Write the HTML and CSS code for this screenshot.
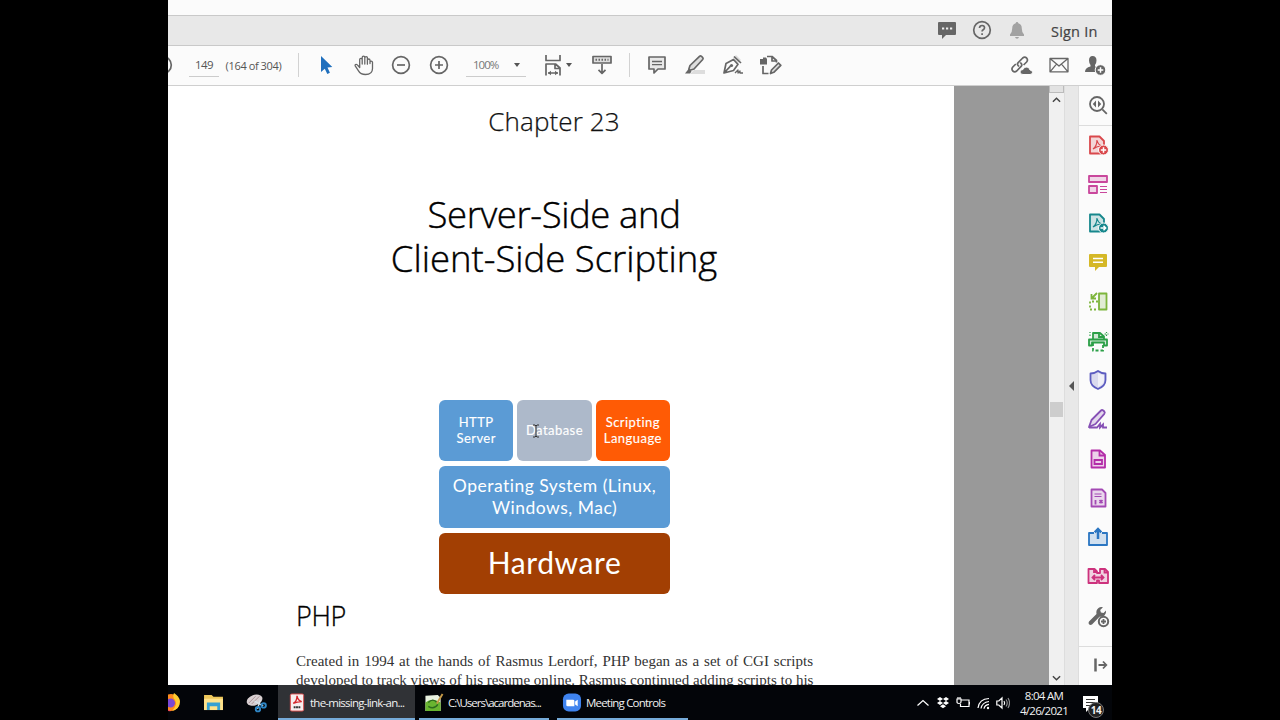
FILE: index.html
```html
<!DOCTYPE html>
<html lang="en">
<head>
<meta charset="utf-8">
<title>Server-Side and Client-Side Scripting</title>
<link rel="stylesheet" href="styles.css">
</head>
<body>
<div class="screen">
  <div class="top-strip"></div>
  <header class="account-bar">
    <svg class="ic" viewBox="0 0 24 24"><path fill="#666" d="M4 4h16q1 0 1 1v11q0 1-1 1h-9l-4 4v-4H4q-1 0-1-1V5q0-1 1-1z"/><path stroke="#eee" stroke-width="2" stroke-dasharray="2.2 1.8" d="M7 10.500h10.500"/></svg>
    <svg class="ic" viewBox="0 0 24 24"><circle class="ln" cx="12" cy="12" r="8.300"/><path class="ln" d="M9.500 10q.2-2.500 2.600-2.500t2.400 2.200q0 1.200-1.300 2-1.100.7-1.100 1.800M12.100 15.200v1.700"/></svg>
    <svg class="ic" viewBox="0 0 24 24"><path fill="#a2a2a2" d="M12 4q1.200 0 1.300 1.300 3.500 1 3.500 5.200 0 4 2.200 6v1.500H5v-1.500q2.200-2 2.200-6 0-4.200 3.500-5.200Q10.800 4 12 4zM10 19h4q-.5 1.700-2 1.700T10 19z"/></svg>
    <span class="sign-in">Sign In</span>
  </header>
  <div class="toolbar">
    <svg class="ic cut" viewBox="0 0 24 24"><circle class="ln" cx="12" cy="12" r="8.300"/></svg>
    <span class="page-no">149</span>
    <span class="page-count">(164 of 304)</span>
    <i class="rule"></i>
    <svg class="ic" viewBox="0 0 24 24"><path fill="#1f6fbd" d="M7 3v16l3.800-3.300 2.500 5.300 2.600-1.200-2.400-5.200 4.800-.5z"/></svg>
    <svg class="ic" viewBox="0 0 24 24"><path class="ln thin" d="M7.700 14.500V6.600q0-1.300 1.200-1.300t1.300 1.300V11 4.500q0-1.300 1.300-1.300t1.300 1.300V11 5q0-1.300 1.300-1.300T15.400 5v6.200V7.300q0-1.300 1.300-1.300T18 7.300v3.200-1.200q0-1.200 1.200-1.200t1.300 1.200v6.200q0 6-7 6-5 0-7-3.600l-3.300-5q-.5-1.500 1-1.600 1 0 2 1.500z"/></svg>
    <svg class="ic" viewBox="0 0 24 24"><circle class="ln" cx="12" cy="12" r="8.400"/><path class="ln" d="M8 12h8"/></svg>
    <svg class="ic" viewBox="0 0 24 24"><circle class="ln" cx="12" cy="12" r="8.400"/><path class="ln" d="M8 12h8M12 8v8"/></svg>
    <span class="zoom">100%<b class="caret"></b></span>
    <span class="fit"><svg class="ic" viewBox="0 0 24 24"><path class="ln" d="M5 2v5.500h14V2M5 22.500V11h9.500l4.500 4v7.500M14 11v4.500h5M7 20h10"/><path fill="#666" d="m10 17.700-3 2.300 3 2.300zm4 0 3 2.300-3 2.300z"/></svg><b class="caret"></b></span>
    <svg class="ic" viewBox="0 0 24 24"><path class="ln" style="fill:#ddd" d="M3 3.500h18v6.500H3z"/><path stroke="#666" stroke-width="2" stroke-dasharray="1.500 1.500" d="M5.500 6.800h13"/><path class="ln" d="M12 11v9M8.500 16.800 12 20.300l3.500-3.500"/></svg>
    <i class="rule"></i>
    <svg class="ic" viewBox="0 0 24 24"><path class="ln" style="fill:#e8e8e8" d="M4 4h16v12h-7l-4 4v-4H4z"/><path class="ln thin" d="M7 8.500h10M7 11.700h10"/></svg>
    <svg class="ic" viewBox="0 0 24 24"><path fill="#ddd" d="M11 17h11v4H7z"/><path class="ln" style="fill:#ddd" d="M7 12.500 16.500 3.300q1-.8 2 0l1.200 1.200q.8 1 0 2L11 16l-4 1.200-1.200-1z"/><path fill="#666" d="m5.500 16 3 2.500L7 20.500H2z"/></svg>
    <svg class="ic" viewBox="0 0 24 24"><path fill="#ddd" d="m12 5 3-3 5 5-3 3z"/><path class="ln" d="m3 20 2-9.500 7.500-4 4.500 4.800-4.500 6.200zM3 20l6.500-6.800M13 3.500l7 6.500"/><circle cx="10.500" cy="12.500" r="1.600" fill="#666"/><path class="ln thin" d="m14 20 3-3v3l2-2v2h3"/></svg>
    <svg class="ic nudge" viewBox="0 0 24 24"><path class="ln" d="M9 3.500h5l4.500 4v2M14 3.500V8h4.500M5 13v7.500h5.500"/><path fill="#666" d="M2 6h3V4.500h3L9 6v5.500H2z"/><path class="ln" style="fill:#ddd" d="m12.500 20.500 1-3.500 7-7 2.300 2.300-7 7z"/></svg>
    <span></span>
    <svg class="ic" viewBox="0 0 24 24"><g class="ln"><path d="m10 13.500-.8-.8q-1.500-1.600 0-3.100l4.500-4.600q2-1.600 3.900 0 1.700 2 0 4l-3 3"/><path d="m11.200 9.500.9.900q1.400 1.500 0 3L7.700 18q-2 1.600-3.900 0-1.700-2 0-4l3-3"/></g><path fill="#666" stroke="#fbfbfb" d="M14 21.500q-3 0-3-2.500t3-2.500q1-3 4-2.500 2.500.3 3 3 2.500.1 2.500 2.300 0 2.200-2.500 2.200z"/></svg>
    <svg class="ic" viewBox="0 0 24 24"><path class="ln thin" d="M3 5.500h18v13.300H3zM3 5.500l9 7.500 9-7.500M3 18.800l6.500-7.700M21 18.800l-6.500-7.700"/></svg>
    <svg class="ic" viewBox="0 0 24 24"><path fill="#666" d="M9.500 3q4 0 4 4.500 0 2.500-1.500 4.500v1.500l3 1v4.500H2q0-4.500 5.500-5.500V12Q6 10 6 7.500 6 3 9.500 3z"/><circle cx="17.500" cy="17" r="5.300" fill="#666" stroke="#fbfbfb"/><path stroke="#fff" stroke-width="1.500" d="M14.700 17h5.600M17.500 14.200v5.600"/></svg>
  </div>

  <main class="workspace">
    <article class="page">
      <h3 class="chapter">Chapter 23</h3>
      <h1 class="title"><span class="t1">Server-Side and</span><span class="t2">Client-Side Scripting</span></h1>
      <section class="stack">
        <div class="block small blue">HTTP<br>Server</div>
        <div class="block small slate">Database<svg class="ibeam" viewBox="0 0 8 14"><path d="M1 1h2l1 1 1-1h2M4 2v10M1 13h2l1-1 1 1h2" fill="none" stroke="#333"/></svg></div>
        <div class="block small orange">Scripting<br>Language</div>
        <div class="block medium wide blue"><span>Operating System (Linux,<br>Windows, Mac)</span></div>
        <div class="block large wide brown">Hardware</div>
      </section>
      <h2 class="section-title">PHP</h2>
      <p class="copy"><span>Created in 1994 at the hands of Rasmus Lerdorf, PHP began as a set of CGI scripts</span><span>developed to track views of his resume online. Rasmus continued adding scripts to his</span></p>
    </article>
    <div class="canvas"></div>
    <div class="scrollbar">
      <i class="split"></i>
      <svg class="arrow" viewBox="0 0 10 6"><path d="m1 5 4-4 4 4"/></svg>
      <i class="thumb"></i>
      <svg class="arrow" viewBox="0 0 10 6"><path d="m1 1 4 4 4-4"/></svg>
    </div>
    <div class="gutter"><i class="collapse"></i></div>
    <aside class="tools">
      <div class="tool first"><svg class="ic gray" viewBox="0 0 24 24"><circle class="s2" cx="11" cy="11" r="7"/><path class="s2" d="m16.300 16.300 4.500 4.500"/><path fill="#666" d="M10 7.500v7L6.800 11zm2 0v7l3.200-3.500z"/></svg></div>
      <div class="tool"><svg class="ic red" viewBox="0 0 24 24"><path class="sf" d="M4 3.500h9.500L18 8v12.500H4z"/><path class="s1" d="M7 16q4-3 4-9 1 5 5 6-5 0-9 3z"/><circle class="dot" cx="17.500" cy="17" r="5"/><path class="w" d="M14.800 17h5.400m-2.700-2.700v5.400"/></svg></div>
      <div class="tool"><svg class="ic pink" viewBox="0 0 24 24"><path class="sf" d="M3 4h18v6H3zM3 14h8v7H3z"/><path class="s1" d="M14 14.500h7M14 17.500h7M14 20.500h7"/></svg></div>
      <div class="tool"><svg class="ic teal" viewBox="0 0 24 24"><path class="sf" d="M4 3.500h9.500L18 8v12.500H4z"/><path class="s1" d="M7 16q4-3 4-9 1 5 5 6-5 0-9 3z"/><circle class="dot" cx="17.500" cy="17" r="5"/><path class="w" d="M14.500 17h5m-2-2.200 2.200 2.200-2.200 2.200"/></svg></div>
      <div class="tool"><svg class="ic gold" viewBox="0 0 24 24"><path fill="currentColor" d="M4 4h16q1 0 1 1v11q0 1-1 1h-7l-4 4v-4H4q-1 0-1-1V5q0-1 1-1z"/><path class="w" d="M7 8.500h10M7 12.200h10"/></svg></div>
      <div class="tool"><svg class="ic lime" viewBox="0 0 24 24"><path class="sf" d="M13 3.500h7.500v16H13z"/><path class="s2" stroke-dasharray="2 2" d="M12 11.500H4v8h8"/><path class="s2" d="m11 3-5 5M5.500 4v4.500H10"/></svg></div>
      <div class="tool"><svg class="ic green" viewBox="0 0 24 24"><path class="sf" d="M7 10V4h7l4 3.500V10M3 10.500h18v6h-3v-3H6v3H3z"/><path class="s2" d="M13 4v4h5"/><path class="s2" stroke-dasharray="3 2" d="M7 14v7.500h10V14"/><path class="s1" stroke-dasharray="1.500 1.500" d="M4 7V3M20.500 7V3M18.500 5h4"/></svg></div>
      <div class="tool"><svg class="ic indigo" viewBox="0 0 24 24"><path class="sf" d="M12 3q3.500 2.500 7.500 2.500V12q0 6-7.500 9-7.500-3-7.500-9V5.500Q8.500 5.500 12 3z"/><path fill="#fff" opacity=".6" d="M12 5v14q6-3 6-7V7q-3 0-6-2z"/></svg></div>
      <div class="tool"><svg class="ic violet" viewBox="0 0 24 24"><path class="sf" d="m3 20 2.500-7L15 3.500q1-1 2.300 0l1 1q1 1 0 2.300L9.500 17z"/><path class="s2" d="M3 20.500h8l3-3.500v3.500l3-3v3h4"/></svg></div>
      <div class="tool"><svg class="ic magenta" viewBox="0 0 24 24"><path class="sf" d="M5.500 3.500H14L19 8v12.500H5.500z"/><path class="s2" d="M13.500 4v4.500H19M8.500 13h7.500v4H8.500z"/></svg></div>
      <div class="tool"><svg class="ic purple" viewBox="0 0 24 24"><path class="sf" d="M5.500 3.500H16l3.500 3.500v13.500h-14z"/><path class="s1" d="M8.500 8h7M8.500 10.500h7"/><path class="s2" d="M9.500 14v4.500M13.500 14.200l3 3m0-3-3 3"/></svg></div>
      <div class="tool"><svg class="ic blue-ic" viewBox="0 0 24 24"><path class="sf" d="M8 8H3v12h18V8h-5"/><path class="s2" d="M12 14V4M8.700 7.300 12 4l3.300 3.300" style="stroke-width:2.500"/></svg></div>
      <div class="tool"><svg class="ic rose" viewBox="0 0 24 24"><path class="sf" d="M2.500 5h6l2.500 2.500V9h3V5h5l3 3v11h-9v-2.500h-2V19H2.500z"/><path class="s2" d="M6.500 13.500h11M9 11l-2.500 2.500L9 16m6-5 2.500 2.500L15 16M8 5v3h3M18.500 5v3.500H22"/></svg></div>
      <div class="tool"><svg class="ic gray" viewBox="0 0 24 24"><path fill="#666" d="M3 17.500 10.500 10Q9.700 6 12.500 4q2-1.500 4.500-.7L14.200 6l.7 2.500 2.600.6L20 6.500q.5 3-1.500 5-2 1.700-5 1.200L6 20.500q-1.700 1-3-.2-1-1.400 0-2.800z"/><circle cx="17.500" cy="17.500" r="4.700" fill="#fbfbfb" stroke="#666" stroke-width="2"/><path class="s2" d="M15 17.500h5M17.500 15v5"/></svg></div>
      <div class="tool exit"><svg class="ic gray" viewBox="0 0 24 24"><path class="s2" d="M9.500 5.500v13" style="stroke-width:2.500"/><path class="s2" d="M12.500 12H20m-3-3.500 3.300 3.500-3.300 3.500"/></svg></div>
    </aside>
  </main>

  <footer class="taskbar">
    <svg class="fox" viewBox="0 0 20 20"><circle cx="10" cy="10.500" r="8.500" fill="#ff8a1d"/><path d="M13 1q5 3 6 8 0 8-8 10 6-6 3-11-3-3-1-7z" fill="#ffcd32"/><path d="M1.500 9q1 9 9 10Q4 20 1.500 14z" fill="#f13b62"/><circle cx="9.500" cy="11" r="4.500" fill="#7948d5"/></svg>
    <svg class="folder" viewBox="0 0 20 18"><path fill="#edc75a" d="M0 1h8l2 2h10v14H0z"/><path fill="#ffe28a" d="M0 5h20v12H0z"/><path fill="#36a1d2" d="M3 9h14v8h-3v-4H6v4H3z"/></svg>
    <svg class="snip" viewBox="0 0 22 20"><ellipse cx="9" cy="7" rx="8.500" ry="5.500" transform="rotate(-20 9 7)" fill="#d8cfd0"/><path d="m3 10 7-7M6 11l8-8" stroke="#a98f93"/><path d="m9 8 9 5M15 7l-3 9" stroke="#d9e3e9" stroke-width="1.500"/><g fill="none" stroke="#2f86c5" stroke-width="2"><circle cx="18.500" cy="12.500" r="2.300"/><circle cx="12.500" cy="16.500" r="2.300"/></g></svg>
    <div class="task active w1"><svg class="app" viewBox="0 0 18 20"><rect x="2" y="1" width="14" height="18" rx="1.500" fill="#f8eeee" stroke="#d94a4a"/><path d="M5 11q4-2 4-8 1 5 5 6-5 0-9 2z" fill="none" stroke="#d5262b" stroke-width="1.400"/><path d="M5.500 15h7" stroke="#333" stroke-width="2" stroke-dasharray="2 .5"/></svg><span class="l1">the-missing-link-an...</span></div>
    <div class="task w2"><svg class="app" viewBox="0 0 20 20"><path fill="#e9f2e1" d="m1 3 13-1 3 3v14H1z"/><path fill="#69b530" d="M1 10q7-6 16 0v9H1z"/><path fill="none" stroke="#2d6a1f" stroke-width="1.500" d="M4 10q5-5 9 0M4 14q6 4 10-2"/><path stroke="#c69a48" stroke-width="2" d="m19 1-6 10"/></svg><span class="l2">C:\Users\acardenas...</span></div>
    <div class="task w3"><svg class="app" viewBox="0 0 20 20"><rect x=".5" y=".5" width="19" height="19" rx="6" fill="#3f83ee"/><path fill="#fff" d="M4 7h7q1.500 0 1.500 1.500V14h-7Q4 14 4 12.500zm9.300 2L16 7v7l-2.700-2z"/></svg><span class="l3">Meeting Controls</span></div>
    <div class="tray">
      <svg class="tr" viewBox="0 0 14 14"><path d="m1.500 9.500 5.500-5 5.500 5"/></svg>
      <svg class="tr" viewBox="0 0 14 14"><path style="fill:#fff;stroke:none" d="m4 1 3 2-3 2-3-2zm6 0 3 2-3 2-3-2zM4 5l3 2-3 2-3-2zm6 0 3 2-3 2-3-2zM7 8.300l3 2-3 2-3-2z"/></svg>
      <svg class="tr" viewBox="0 0 14 14"><path d="M5.500 4H13v6.500H4.500V8M13.500 6v2.500M1 3h4v3q0 1.500-2 1.500T1 6zM2 1v2M4 1v2"/></svg>
      <svg class="tr" viewBox="0 0 14 14"><path d="M2 12Q3 3 13 2.500M5 12.500q1-6 8-7M8 12.800q.5-4 5-4.500"/><circle cx="12" cy="12" r="1.200" style="fill:#fff;stroke:none"/></svg>
      <svg class="tr" viewBox="0 0 14 14"><path d="M.8 5h2L6 2v10L2.800 9h-2zM8 5q1.300 2 0 4"/><path d="M10 3.500q2.500 3.500 0 7M12 2q3 5 0 10" opacity=".55"/></svg>
    </div>
    <div class="clock"><span class="time">8:04 AM</span><span class="date">4/26/2021</span></div>
    <div class="notice"><svg viewBox="0 0 15 17"><path fill="#fff" d="M0 1h15v12H7l-4 4v-4H0z"/><path stroke="#333" d="M3 4.500h9M3 7.500h9M3 10.500h5"/></svg><b class="badge">14</b></div>
  </footer>
</div>
</body>
</html>
```
FILE: styles.css
```css
* { box-sizing: border-box; }
body { margin: 0; background: #000; overflow: hidden; font-family: "Open Sans", "Noto Sans", sans-serif; }
h1, h2, h3, p { margin: 0; font-weight: 300; }
.screen { width: 944px; height: 720px; margin-left: 168px; overflow: hidden; display: flex; flex-direction: column; background: #fbfbfb; }
.top-strip { height: 15px; flex: none; }
.account-bar { height: 31px; flex: none; background: #e8e8e8; border-top: 1px solid #c9c9c9; border-bottom: 1px solid #c9c9c9; display: flex; align-items: center; justify-content: flex-end; padding: 0 14px 1px 0; }
.account-bar .ic { margin-right: 11px; }
.account-bar .ic:nth-of-type(3) { margin-right: 22px; }
.sign-in { font-size: 14.5px; color: #444; width: 47px; white-space: nowrap; letter-spacing: .2px; line-height: 20px; padding-top: 3px; -webkit-text-stroke: .2px #444; }
.ic { width: 24px; height: 24px; display: block; flex: none; }
.ln { fill: none; stroke: #666; stroke-width: 1.7; stroke-linejoin: round; }
.ln.thin { stroke-width: 1.3; }
.toolbar { height: 40px; flex: none; border-bottom: 1px solid #cfcfcf; padding-bottom: 1px; display: grid; grid-template-columns: 21px 30px 69px 20px 36px 39px 36px 39px 76px 50px 36px 18px 38px 38px 37px 39px 1fr 38px 38px 34px; justify-items: center; align-items: center; font-size: 11.5px; color: #555; }
.cut { justify-self: start; margin-left: -17px; }
.page-no { width: 30px; height: 24px; line-height: 24px; text-align: center; border-bottom: 1px solid #ccc; letter-spacing: -.6px; }
.page-count { letter-spacing: -.3px; word-spacing: -.3px; font-size: 11px; white-space: nowrap; }
.nudge { margin-left: -2px; }
.rule { width: 1px; height: 24px; background: #d2d2d2; }
.zoom { width: 60px; height: 24px; border-bottom: 1px solid #ccc; padding: 0 6px 0 7px; display: flex; align-items: center; justify-content: space-between; color: #777; letter-spacing: -1px; }
.caret { border: 3px solid transparent; border-top: 4px solid #555; border-bottom: 0; }
.fit { display: flex; align-items: center; gap: 1px; margin-left: -5px; }
.workspace { height: 599px; flex: none; display: flex; }
.page { width: 786px; background: #fff; overflow: hidden; color: #000; }
.chapter { height: 40px; margin-top: 15px; padding-right: 14px; text-align: center; font-size: 26px; line-height: 40px; color: #111; letter-spacing: .1px; -webkit-text-stroke: .25px #111; }
.title { margin-top: 51px; height: 88px; padding-right: 14px; text-align: center; font-size: 36.500px; line-height: 44px; white-space: nowrap; -webkit-text-stroke: .4px #000; }
.t1, .t2 { display: block; letter-spacing: -.4px; }
.t2 { letter-spacing: 0; }
.stack { display: grid; grid-template-columns: repeat(3, 1fr); grid-auto-rows: 61.500px; gap: 5px 4px; width: 231px; margin: 119.500px 0 0 271px; font-family: Lato, sans-serif; color: #fff; }
.block { border-radius: 6px; display: flex; align-items: center; justify-content: center; text-align: center; position: relative; white-space: nowrap; }
.small { font-size: 13px; line-height: 16px; letter-spacing: .45px; padding-bottom: 1px; -webkit-text-stroke: .15px #fff; }
.medium { font-size: 17.500px; line-height: 22px; letter-spacing: .5px; }
.large { font-size: 30px; line-height: 36px; padding-bottom: 3px; letter-spacing: .6px; }
.wide { grid-column: 1 / -1; }
.blue { background: #5b9bd5; }
.slate { background: #adb9ca; }
.orange { background: #ff5b05; }
.brown { background: #a23f03; }
.ibeam { position: absolute; left: 15px; top: 24px; width: 8px; height: 14px; }
.section-title { margin: 3.500px 0 0 128px; font-size: 27px; line-height: 36px; letter-spacing: -.3px; -webkit-text-stroke: .3px #000; }
.copy { margin: 18px 0 0 128px; width: 517px; font-family: "Liberation Serif", serif; font-weight: 400; font-size: 15px; line-height: 19px; color: #333; }
.copy span { display: block; text-align: justify; text-align-last: justify; white-space: nowrap; }
.canvas { width: 95px; background: #999; }
.scrollbar { width: 15px; background: #f0f0f0; display: flex; flex-direction: column; align-items: center; }
.split { width: 15px; height: 7px; background: #e2e2e2; border: 1px solid #bbb; border-top: 0; }
.arrow { width: 9px; height: 6px; margin-top: 4px; fill: none; stroke: #444; stroke-width: 1.6; }
.arrow:last-child { margin: auto 0 4px; }
.thumb { width: 13px; height: 15px; margin-top: 299px; background: #cdcdcd; }
.gutter { width: 15px; background: #e8e8e8; border-left: 1px solid #ddd; border-right: 1px solid #ddd; display: flex; align-items: center; justify-content: center; }
.collapse { border: 5px solid transparent; border-right: 5px solid #555; border-left: 0; }
.tools { width: 33px; background: #fbfbfb; display: flex; flex-direction: column; overflow: hidden; }
.tool { height: 39.250px; flex: none; display: flex; align-items: center; padding: 0 0 1px 7px; }
.tool.first { height: 39.500px; padding-bottom: 0; border-bottom: 1px solid #ddd; }
.exit { margin-top: 10px; border-top: 1px solid #ddd; }
.s2 { fill: none; stroke: currentColor; stroke-width: 1.8; }
.s1 { fill: none; stroke: currentColor; stroke-width: 1.2; }
.sf { fill: currentColor; fill-opacity: .2; stroke: currentColor; stroke-width: 1.8; stroke-linejoin: round; }
.dot { fill: currentColor; stroke: #fbfbfb; }
.w { fill: none; stroke: #fff; stroke-width: 1.500; }
.gray { color: #666; } .red { color: #d9484c; } .pink { color: #c9479c; } .teal { color: #16878c; } .gold { color: #d5b827; }
.lime { color: #7db53c; } .green { color: #2b9f47; } .indigo { color: #5c5cc0; } .violet { color: #8650b5; } .magenta { color: #b32da8; }
.purple { color: #a349b4; } .blue-ic { color: #2b76c2; } .rose { color: #cd327d; }
.taskbar { height: 35px; flex: none; background: #030509; color: #f1f1f1; display: flex; font-size: 12px; }
.fox { width: 20px; height: 20px; margin: 7px 0 0 -7px; }
.folder { width: 19px; height: 17px; margin: 9px 0 0 23px; }
.snip { width: 21px; height: 20px; margin: 8px 0 0 23px; }
.task { height: 35px; display: flex; align-items: center; white-space: nowrap; border-bottom: 2px solid #76abd9; padding-top: 2px; flex: none; }
.app { width: 20px; height: 19px; margin-right: 4px; flex: none; }
.active { background: #303236; }
.w1 { width: 137px; margin-left: 11px; padding-left: 9px; }
.w1 .app { margin-right: 3px; }
.w2 { width: 130px; margin-left: 4px; padding-left: 5px; }
.w3 { width: 131px; margin-left: 8px; padding-left: 5px; }
.l1, .l2, .l3 { font-size: 11.500px; letter-spacing: -.75px; }
.l2 { letter-spacing: -1px; }
.l3 { letter-spacing: -.8px; }
.tray { display: flex; align-items: center; gap: 6px; margin-left: 228px; }
.tr { width: 14px; height: 14px; fill: none; stroke: #fff; stroke-width: 1.2; }
.clock { width: 60px; margin-left: 4px; display: flex; flex-direction: column; align-items: center; line-height: 15px; padding-top: 3px; font-size: 11.500px; letter-spacing: -.7px; }
.date { letter-spacing: -.7px; }
.notice { width: 22px; height: 24px; margin: 10px 0 0 9px; position: relative; }
.notice svg { width: 15px; height: 17px; display: block; }
.badge { position: absolute; left: 5px; top: 7px; width: 16px; height: 16px; border-radius: 50%; background: #222; border: 1px solid #777; font-size: 10px; line-height: 14px; text-align: center; letter-spacing: -.5px; }
```
